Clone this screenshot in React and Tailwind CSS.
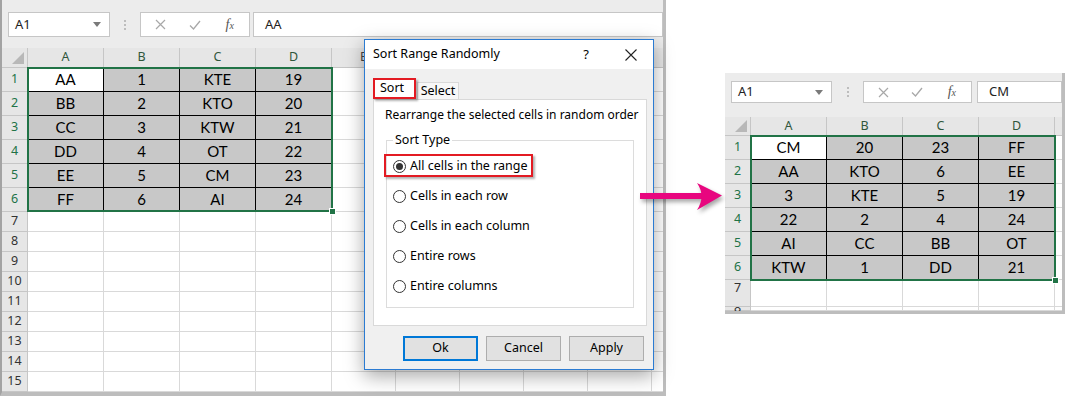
import React from "react";

const leftCols = [
  { label: "A", w: "w-[76px]", sel: true },
  { label: "B", w: "w-[76px]", sel: true },
  { label: "C", w: "w-[76px]", sel: true },
  { label: "D", w: "w-[76px]", sel: true },
  { label: "E", w: "w-[64px]" },
  { label: "F", w: "w-[64px]" },
  { label: "G", w: "w-[64px]" },
  { label: "H", w: "w-[64px]" },
  { label: "I", w: "w-[64px]" },
  { label: "J", w: "w-[64px]" },
];

const rightCols = [
  { label: "A", w: "w-[76px]", sel: true },
  { label: "B", w: "w-[76px]", sel: true },
  { label: "C", w: "w-[76px]", sel: true },
  { label: "D", w: "w-[76px]", sel: true },
  { label: "E", w: "w-[64px]" },
];

const leftData = [
  ["AA", "1", "KTE", "19"],
  ["BB", "2", "KTO", "20"],
  ["CC", "3", "KTW", "21"],
  ["DD", "4", "OT", "22"],
  ["EE", "5", "CM", "23"],
  ["FF", "6", "AI", "24"],
];

const rightData = [
  ["CM", "20", "23", "FF"],
  ["AA", "KTO", "6", "EE"],
  ["3", "KTE", "5", "19"],
  ["22", "2", "4", "24"],
  ["AI", "CC", "BB", "OT"],
  ["KTW", "1", "DD", "21"],
];

const sortTypes = [
  "All cells in the range",
  "Cells in each row",
  "Cells in each column",
  "Entire rows",
  "Entire columns",
];

function FormulaBar({ value, compact }) {
  const boxH = compact ? "h-[22px]" : "h-[25px]";
  return (
    <div
      className={`flex items-start pl-[6px] ${
        compact ? "h-[44px] pt-[8px]" : "h-[48px] pt-[12px]"
      }`}
    >
      <div
        className={`${boxH} ${compact ? "w-[101px]" : "w-[102px]"} shrink-0 bg-white border border-[#c6c6c6] flex items-center pl-[6px] pr-[8px] text-[13px] text-[#222]`}
      >
        <span>A1</span>
        <svg className="ml-auto" width="8" height="5" viewBox="0 0 8 5">
          <path d="M0 0 L8 0 L4 5 Z" fill="#7a7a7a" />
        </svg>
      </div>
      <div
        className={`${boxH} ${compact ? "w-[31px]" : "w-[30px]"} shrink-0 flex flex-col items-center justify-center gap-[2px]`}
      >
        <div className="w-[2px] h-[2px] bg-[#bdbdbd]" />
        <div className="w-[2px] h-[2px] bg-[#bdbdbd]" />
        <div className="w-[2px] h-[2px] bg-[#bdbdbd]" />
      </div>
      <div
        className={`${boxH} ${compact ? "w-[109px]" : "w-[110px]"} shrink-0 bg-white border border-[#c6c6c6] grid grid-cols-3 items-center justify-items-center px-[2px]`}
      >
        <svg width="11" height="11" viewBox="0 0 11 11">
          <path d="M1 1 L10 10 M10 1 L1 10" stroke="#a8a8a8" strokeWidth="1.2" />
        </svg>
        <svg width="12" height="10" viewBox="0 0 12 10">
          <path d="M1 5.5 L4.5 9 L11 1" stroke="#a8a8a8" strokeWidth="1.3" fill="none" />
        </svg>
        <span className="font-['Liberation_Serif',serif] italic text-[14px] leading-none text-[#555]">
          f<span className="text-[10px]">x</span>
        </span>
      </div>
      <div
        className={`${boxH} min-w-0 flex-1 ${compact ? "ml-[5px]" : "ml-[3px]"} bg-white border border-[#c6c6c6] flex items-center pl-[11px] text-[13px] text-[#222]`}
      >
        {value}
      </div>
    </div>
  );
}

function Sheet({ cols, data, headerH, emptyRows, selClass }) {
  return (
    <div className="relative bg-white">
      <div className={`flex ${headerH}`}>
        <div className="w-[26px] shrink-0 relative bg-[#e6e6e6] border-r border-b border-[#c6c6c6]">
          <svg className="absolute right-[3px] bottom-[3px]" width="12" height="12" viewBox="0 0 12 12">
            <path d="M12 0 L12 12 L0 12 Z" fill="#b8b8b8" />
          </svg>
        </div>
        {cols.map((c) => (
          <div
            key={c.label}
            className={`${c.w} shrink-0 bg-[#e6e6e6] border-r border-b border-[#c6c6c6] flex items-center justify-center text-[12.5px] ${
              c.sel ? "text-[#30563c]" : "text-[#444]"
            }`}
          >
            {c.label}
          </div>
        ))}
      </div>

      {data.map((row, r) => (
        <div key={r} className="flex h-[24px]">
          <div className="w-[26px] shrink-0 bg-[#e6e6e6] border-r border-b border-[#c6c6c6] flex items-center justify-center text-[12.5px] text-[#217346]">
            {r + 1}
          </div>
          {cols.map((c, i) =>
            i < 4 ? (
              <div
                key={c.label}
                className={`${c.w} shrink-0 border-r border-b border-black flex items-center justify-center font-['Lato',sans-serif] text-[15px] text-black ${
                  r === 0 && i === 0 ? "bg-white" : "bg-[#c8c8c8]"
                }`}
              >
                {row[i]}
              </div>
            ) : (
              <div key={c.label} className={`${c.w} shrink-0 border-r border-b border-[#d9d9d9]`} />
            )
          )}
        </div>
      ))}

      {emptyRows.map((er) => (
        <div key={er.label} className={`flex ${er.h} overflow-hidden`}>
          <div
            className={`w-[26px] shrink-0 bg-[#e6e6e6] border-r border-b border-[#c6c6c6] flex justify-center text-[12.5px] text-[#333] ${
              er.top ? "items-start leading-[16px]" : "items-center"
            }`}
          >
            {er.label}
          </div>
          {cols.map((c) => (
            <div key={c.label} className={`${c.w} shrink-0 border-r border-b border-[#d9d9d9]`} />
          ))}
        </div>
      ))}

      <div className={`absolute border-2 border-[#217346] ${selClass}`}>
        <div className="absolute -right-[5px] -bottom-[5px] w-[7px] h-[7px] bg-[#217346] border border-white" />
      </div>
    </div>
  );
}

function Radio({ checked }) {
  return (
    <div className="w-[13px] h-[13px] shrink-0 rounded-full border border-[#333] bg-white flex items-center justify-center">
      {checked && <div className="w-[7px] h-[7px] rounded-full bg-[#333]" />}
    </div>
  );
}

function SortDialog() {
  return (
    <div className="absolute left-[364px] top-[39px] w-[290px] h-[331px] border border-[#2b7bd2] bg-[#f0f0f0] shadow-[0_6px_18px_rgba(0,0,0,0.35)] flex flex-col text-[12px] text-black">
      <div className="h-[29px] shrink-0 bg-white flex items-center pl-[8px]">
        <span className="text-[12.5px]">Sort Range Randomly</span>
        <span className="ml-auto text-[13px]">?</span>
        <svg className="ml-[36px] mr-[16px]" width="12" height="12" viewBox="0 0 12 12">
          <path d="M0.5 0.5 L11.5 11.5 M11.5 0.5 L0.5 11.5" stroke="#222" strokeWidth="1.1" />
        </svg>
      </div>

      <div className="flex-1 flex flex-col pl-[8px] pr-[6px] pt-[9px]">
        <div className="flex items-end h-[21px]">
          <div className="relative z-10 w-[43px] h-[21px] bg-white border-2 border-[#e31b23] shadow-[2px_2px_2px_rgba(0,0,0,0.3)] flex items-center pl-[5px] text-[12.5px]">
            Sort
          </div>
          <div className="w-[42px] h-[17px] ml-[1px] bg-[#f7f7f7] border border-b-0 border-[#d9d9d9] flex items-center justify-center text-[12.5px]">
            Select
          </div>
        </div>

        <div className="h-[227px] bg-white border border-[#d9d9d9] flex flex-col">
          <div className="pl-[11px] pt-[7px] leading-[16px] text-[12px] whitespace-nowrap">
            Rearrange the selected cells in random order
          </div>
          <div className="relative ml-[12px] mt-[17px] w-[248px] h-[168px] border border-[#dcdcdc] flex flex-col pt-[10px] pl-[6px]">
            <span className="absolute -top-[9px] left-[6px] bg-white px-[2px] leading-[16px] text-[12.5px]">
              Sort Type
            </span>
            <div className="absolute -left-[3px] top-[13px] w-[149px] h-[23px] border-2 border-[#e31b23] shadow-[2px_2px_2px_rgba(0,0,0,0.3)]" />
            {sortTypes.map((t, i) => (
              <div key={t} className="h-[30px] flex items-center gap-[4px] text-[12.5px]">
                <Radio checked={i === 0} />
                <span>{t}</span>
              </div>
            ))}
          </div>
        </div>

        <div className="mt-[10px] flex justify-end gap-[8px] pr-[3px]">
          <div className="w-[75px] h-[25px] bg-[#e1e1e1] border-2 border-[#0078d7] flex items-center justify-center text-[12.5px]">
            Ok
          </div>
          <div className="w-[75px] h-[25px] bg-[#e1e1e1] border border-[#adadad] flex items-center justify-center text-[12.5px]">
            Cancel
          </div>
          <div className="w-[75px] h-[25px] bg-[#e1e1e1] border border-[#adadad] flex items-center justify-center text-[12.5px]">
            Apply
          </div>
        </div>
      </div>
    </div>
  );
}

function PinkArrow() {
  return (
    <svg
      className="absolute left-[636px] top-[180px] drop-shadow-[2px_3px_2px_rgba(0,0,0,0.35)]"
      width="90"
      height="34"
      viewBox="0 0 90 34"
    >
      <rect x="4" y="13" width="62" height="6" fill="#e8067f" />
      <path d="M61 3 L86 15.5 L61 30 Q70 16 61 3 Z" fill="#e8067f" />
    </svg>
  );
}

export default function App() {
  return (
    <div className="relative w-[1067px] h-[399px] bg-white overflow-hidden font-['Noto_Sans',sans-serif]">
      {/* LEFT EXCEL WINDOW */}
      <div className="absolute left-0 top-0 w-[666px] bg-[#ececec] border-l-2 border-l-[#a3a3a3] border-r-[3px] border-r-[#bdbdbd] border-b-[4px] border-b-[#bdbdbd] overflow-hidden">
        <FormulaBar value="AA" />
        <Sheet
          cols={leftCols}
          data={leftData}
          headerH="h-[20px]"
          emptyRows={[
            { label: "7", h: "h-[20px]" },
            { label: "8", h: "h-[20px]" },
            { label: "9", h: "h-[20px]" },
            { label: "10", h: "h-[20px]" },
            { label: "11", h: "h-[20px]" },
            { label: "12", h: "h-[20px]" },
            { label: "13", h: "h-[20px]" },
            { label: "14", h: "h-[20px]" },
            { label: "15", h: "h-[20px]" },
          ]}
          selClass="left-[25px] top-[19px] w-[306px] h-[145px]"
        />
      </div>

      {/* RIGHT EXCEL WINDOW */}
      <div className="absolute left-[725px] top-[73px] w-[340px] bg-[#ececec] border-r-[3px] border-r-[#bdbdbd] border-b-[3px] border-b-[#bdbdbd] overflow-hidden">
        <FormulaBar value="CM" compact />
        <Sheet
          cols={rightCols}
          data={rightData}
          headerH="h-[19px]"
          emptyRows={[
            { label: "7", h: "h-[27px]", top: true },
            { label: "8", h: "h-[4px]" },
          ]}
          selClass="left-[25px] top-[18px] w-[306px] h-[146px]"
        />
      </div>

      <SortDialog />
      <PinkArrow />
    </div>
  );
}
